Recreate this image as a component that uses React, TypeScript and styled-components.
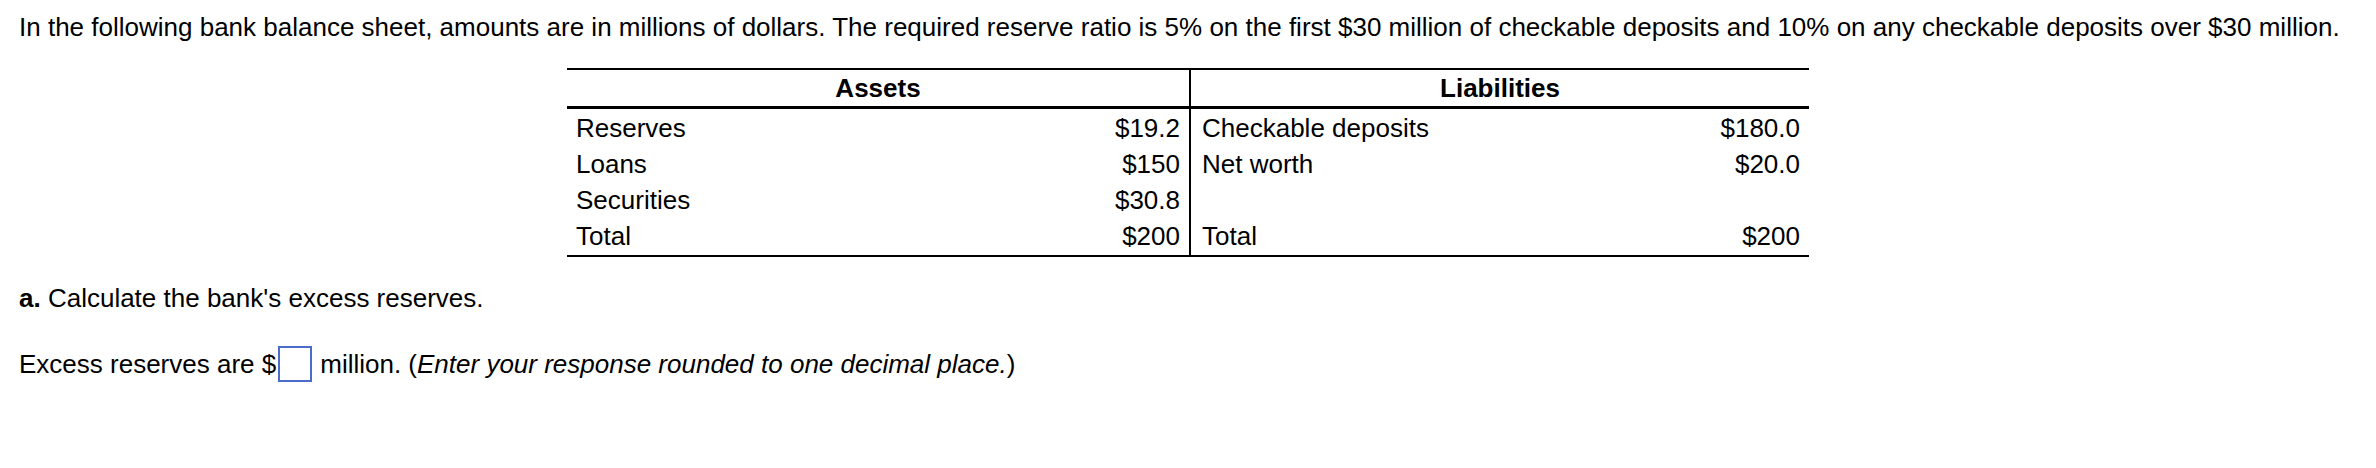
import React from "react";
import styled, { createGlobalStyle } from "styled-components";

const GlobalStyle = createGlobalStyle`
  html, body {
    margin: 0;
    padding: 0;
    background: #ffffff;
  }
  body {
    font-family: "Liberation Sans", Arial, sans-serif;
    color: #000000;
  }
`;

const Page = styled.div`
  padding: 9px 19px 0 19px;
  font-size: 26px;
  line-height: 36px;
`;

const Para = styled.p<{ $top?: number }>`
  margin: ${(p) => p.$top ?? 0}px 0 0 0;
  white-space: nowrap;
`;

const Sheet = styled.table`
  margin: 23px auto 0 auto;
  width: 1242px;
  border-collapse: collapse;
  border-top: 2px solid #000;
  border-bottom: 2px solid #000;

  tbody tr:last-child td {
    height: 39px;
    padding-bottom: 3px;
  }
`;

const HeadCell = styled.th<{ $divider?: boolean }>`
  font-weight: bold;
  text-align: center;
  height: 36px;
  padding: 0;
  line-height: 30px;
  border-bottom: 3px solid #000;
  border-left: ${(p) => (p.$divider ? "2px solid #000" : "none")};
`;

const Cell = styled.td<{ $num?: boolean; $divider?: boolean }>`
  height: 36.6px;
  line-height: 30px;
  padding: 3px ${(p) => (p.$num ? "9px" : "0")} 0 ${(p) => (p.$divider ? "11px" : p.$num ? "0" : "9px")};
  box-sizing: border-box;
  text-align: ${(p) => (p.$num ? "right" : "left")};
  vertical-align: middle;
  border-left: ${(p) => (p.$divider ? "2px solid #000" : "none")};
`;

const AnswerBox = styled.span`
  display: inline-block;
  box-sizing: border-box;
  width: 34px;
  height: 36px;
  margin: 0 8px 0 2px;
  border: 2px solid #4a6ccb;
  vertical-align: middle;
  position: relative;
  top: -2px;
`;

type Row = { a: string; av: string; l: string; lv: string };

const rows: Row[] = [
  { a: "Reserves", av: "$19.2", l: "Checkable deposits", lv: "$180.0" },
  { a: "Loans", av: "$150", l: "Net worth", lv: "$20.0" },
  { a: "Securities", av: "$30.8", l: "", lv: "" },
  { a: "Total", av: "$200", l: "Total", lv: "$200" },
];

export default function App() {
  return (
    <>
      <GlobalStyle />
      <Page>
        <Para>
          In the following bank balance sheet, amounts are in millions of dollars. The required reserve ratio is 5% on
          the first $30 million of checkable deposits and 10% on any checkable deposits over $30 million.
        </Para>
        <Sheet>
          <colgroup>
            <col style={{ width: 310 }} />
            <col style={{ width: 313 }} />
            <col style={{ width: 310 }} />
            <col style={{ width: 309 }} />
          </colgroup>
          <thead>
            <tr>
              <HeadCell colSpan={2}>Assets</HeadCell>
              <HeadCell colSpan={2} $divider>
                Liabilities
              </HeadCell>
            </tr>
          </thead>
          <tbody>
            {rows.map((r, i) => (
              <tr key={i}>
                <Cell>{r.a}</Cell>
                <Cell $num>{r.av}</Cell>
                <Cell $divider>{r.l}</Cell>
                <Cell $num>{r.lv}</Cell>
              </tr>
            ))}
          </tbody>
        </Sheet>
        <Para $top={23}>
          <b>a.</b> Calculate the bank's excess reserves.
        </Para>
        <Para $top={30}>
          Excess reserves are $<AnswerBox />
          million. (<i>Enter your response rounded to one decimal place.</i>)
        </Para>
      </Page>
    </>
  );
}
